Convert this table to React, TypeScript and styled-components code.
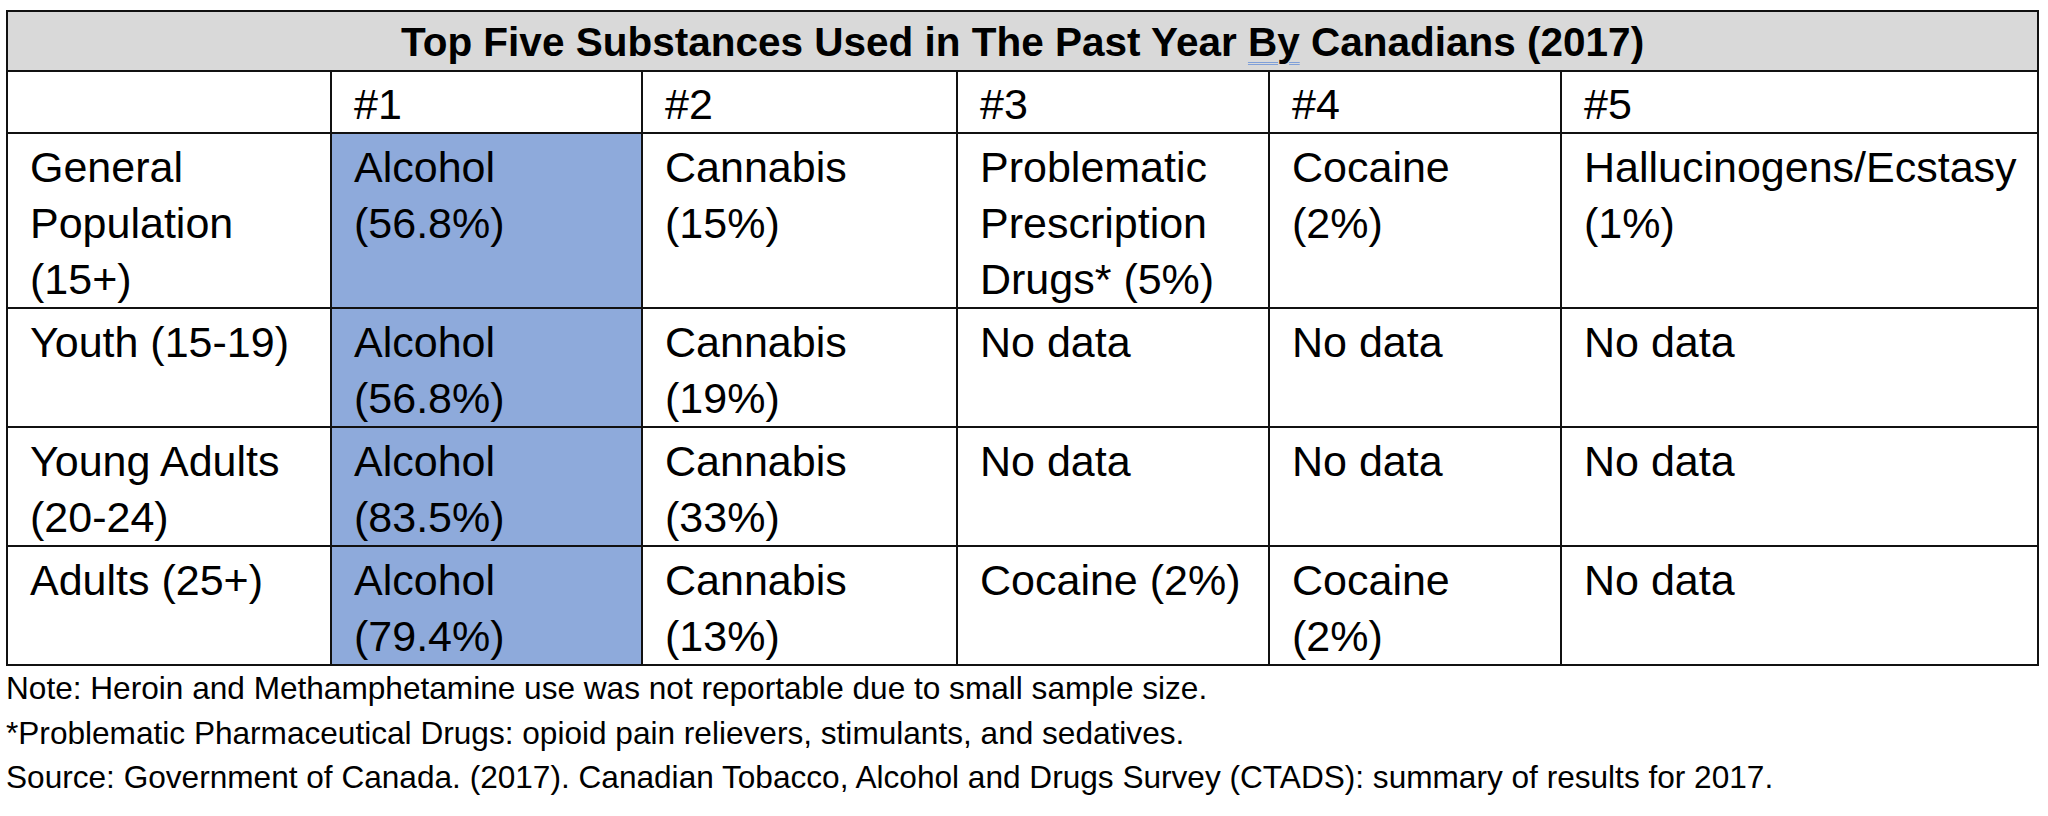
import React from 'react';
import styled, { createGlobalStyle } from 'styled-components';

const GlobalStyle = createGlobalStyle`
  html, body {
    margin: 0;
    padding: 0;
    background: #ffffff;
  }
`;

interface Row {
  label: string[];
  cells: string[][];
}

const columnWidths = [324, 311, 315, 312, 292, 477];

const rows: Row[] = [
  {
    label: ['General', 'Population', '(15+)'],
    cells: [
      ['Alcohol', '(56.8%)'],
      ['Cannabis', '(15%)'],
      ['Problematic', 'Prescription', 'Drugs* (5%)'],
      ['Cocaine', '(2%)'],
      ['Hallucinogens/Ecstasy', '(1%)'],
    ],
  },
  {
    label: ['Youth (15-19)'],
    cells: [['Alcohol', '(56.8%)'], ['Cannabis', '(19%)'], ['No data'], ['No data'], ['No data']],
  },
  {
    label: ['Young Adults', '(20-24)'],
    cells: [['Alcohol', '(83.5%)'], ['Cannabis', '(33%)'], ['No data'], ['No data'], ['No data']],
  },
  {
    label: ['Adults (25+)'],
    cells: [['Alcohol', '(79.4%)'], ['Cannabis', '(13%)'], ['Cocaine (2%)'], ['Cocaine', '(2%)'], ['No data']],
  },
];

const notes = [
  'Note: Heroin and Methamphetamine use was not reportable due to small sample size.',
  '*Problematic Pharmaceutical Drugs: opioid pain relievers, stimulants, and sedatives.',
  'Source: Government of Canada. (2017). Canadian Tobacco, Alcohol and Drugs Survey (CTADS): summary of results for 2017.',
];

const Page = styled.div`
  padding: 10px 0 0 6px;
  font-family: 'Liberation Sans', Arial, sans-serif;
  color: #000;
`;

const Table = styled.table`
  border-collapse: collapse;
  table-layout: fixed;
  width: 2033px;
`;

const TitleCell = styled.th`
  background: #d9d9d9;
  border: 2px solid #111;
  padding: 3px 0 0;
  font-size: 40.5px;
  font-weight: bold;
  line-height: 55px;
  text-align: center;
`;

const Squiggle = styled.span`
  text-decoration: underline double #7f9fd8;
  text-underline-offset: 6px;
  text-decoration-thickness: 1px;
`;

const Cell = styled.td<{ $accent?: boolean }>`
  border: 2px solid #111;
  padding: 5px 4px 0 22px;
  vertical-align: top;
  font-size: 43px;
  font-weight: normal;
  line-height: 56px;
  text-align: left;
  white-space: nowrap;
  background: ${(props): string => (props.$accent ? '#8eaadb' : '#ffffff')};
`;

const HeadCell = styled(Cell).attrs({ as: 'th' })`
  padding-top: 4px;
`;

const Line = styled.div``;

const Footer = styled.div`
  margin-top: 0;
  font-size: 31.6px;
  line-height: 44.5px;
`;

const Lines: React.FC<{ lines: string[] }> = ({ lines }) => (
  <>
    {lines.map((l, i) => (
      <Line key={i}>{l}</Line>
    ))}
  </>
);

const App: React.FC = () => (
  <Page>
    <GlobalStyle />
    <Table>
      <colgroup>
        {columnWidths.map((w, i) => (
          <col key={i} style={{ width: w }} />
        ))}
      </colgroup>
      <thead>
        <tr>
          <TitleCell colSpan={6}>
            Top Five Substances Used in The Past Year <Squiggle>By</Squiggle> Canadians (2017)
          </TitleCell>
        </tr>
        <tr>
          <HeadCell />
          {['#1', '#2', '#3', '#4', '#5'].map((h) => (
            <HeadCell key={h}>{h}</HeadCell>
          ))}
        </tr>
      </thead>
      <tbody>
        {rows.map((row, r) => (
          <tr key={r}>
            <Cell>
              <Lines lines={row.label} />
            </Cell>
            {row.cells.map((c, i) => (
              <Cell key={i} $accent={i === 0}>
                <Lines lines={c} />
              </Cell>
            ))}
          </tr>
        ))}
      </tbody>
    </Table>
    <Footer>
      {notes.map((n) => (
        <div key={n}>{n}</div>
      ))}
    </Footer>
  </Page>
);

export default App;
